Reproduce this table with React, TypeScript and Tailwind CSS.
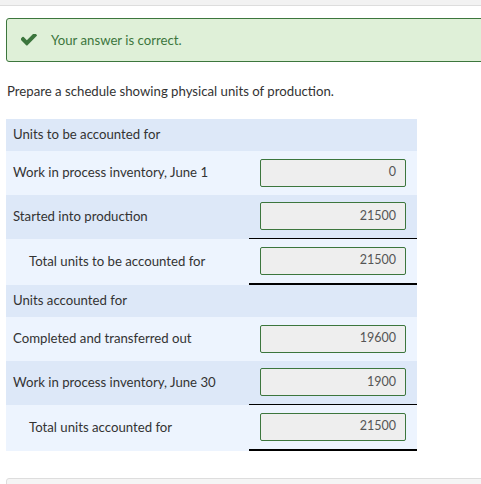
import React from 'react';

type Row =
  | { kind: 'head'; label: string }
  | { kind: 'input'; label: string; value: string; indent?: boolean; line?: 'single' | 'double'; shade: 'dark' | 'light' };

const rows: Row[] = [
  { kind: 'head', label: 'Units to be accounted for' },
  { kind: 'input', label: 'Work in process inventory, June 1', value: '0', shade: 'light' },
  { kind: 'input', label: 'Started into production', value: '21500', shade: 'dark', line: 'single' },
  { kind: 'input', label: 'Total units to be accounted for', value: '21500', shade: 'light', indent: true, line: 'double' },
  { kind: 'head', label: 'Units accounted for' },
  { kind: 'input', label: 'Completed and transferred out', value: '19600', shade: 'light' },
  { kind: 'input', label: 'Work in process inventory, June 30', value: '1900', shade: 'dark', line: 'single' },
  { kind: 'input', label: 'Total units accounted for', value: '21500', shade: 'light', indent: true, line: 'double' },
];

function CheckIcon() {
  return (
    <svg width="16" height="13" viewBox="160 500 1520 1100" className="shrink-0">
      <path
        fill="#3c763d"
        d="M1671 566q0 40-28 68l-724 724-136 136q-28 28-68 28t-68-28l-136-136-362-362q-28-28-28-68t28-68l136-136q28-28 68-28t68 28l294 295 656-657q28-28 68-28t68 28l136 136q28 28 28 68z"
      />
    </svg>
  );
}

function ScheduleRow({ row }: { row: Row }) {
  if (row.kind === 'head') {
    return (
      <div className="h-[32px] flex items-center bg-[#dde8f8] pl-[7px] text-[13.2px] text-[#333]">
        {row.label}
      </div>
    );
  }
  const bg = row.shade === 'dark' ? 'bg-[#dde8f8]' : 'bg-[#edf4fe]';
  let height = 'h-[44px]';
  let border = '';
  if (row.line === 'single') {
    border = 'border-b border-black';
  } else if (row.line === 'double') {
    height = 'h-[46px]';
    border = 'border-b-2 border-black';
  }
  return (
    <div className={`${height} flex ${bg}`}>
      <div className={`flex-1 flex items-center text-[13.2px] text-[#333] ${row.indent ? 'pl-[23px] pt-[1px]' : 'pl-[7px]'}`}>
        {row.label}
      </div>
      <div className={`w-[168px] flex items-center justify-center ${border}`}>
        <div className="w-[146px] h-[28px] border border-[#3c763d] rounded-[2px] bg-[#eeeeee] flex items-center justify-end pr-[9px] text-[12.5px] text-[#555]">
          {row.value}
        </div>
      </div>
    </div>
  );
}

export default function App() {
  return (
    <div className="w-[481px] h-[484px] overflow-hidden bg-white font-['Lato','Liberation_Sans',sans-serif]">
      <div className="h-[6px] bg-[#f2f2f2] border-b border-[#dddddd]" />

      <div className="mt-[12px] ml-[6px] w-[480px] h-[44px] border border-[#3c763d] rounded-[3px] bg-[#dff0d8] flex items-center pl-[14px]">
        <CheckIcon />
        <span className="ml-[14px] mt-[2px] text-[13.2px] text-[#3c763d]">Your answer is correct.</span>
      </div>

      <p className="mt-[20px] ml-[7px] text-[13.2px] text-[#333]">
        Prepare a schedule showing physical units of production.
      </p>

      <div className="mt-[17px] ml-[6px] w-[411px]">
        {rows.map((row, i) => (
          <ScheduleRow key={i} row={row} />
        ))}
      </div>

      <div className="mt-[27px] ml-[6px] w-[480px] h-[20px] border border-[#dddddd] rounded-[3px] bg-[#f5f5f5]" />
    </div>
  );
}
